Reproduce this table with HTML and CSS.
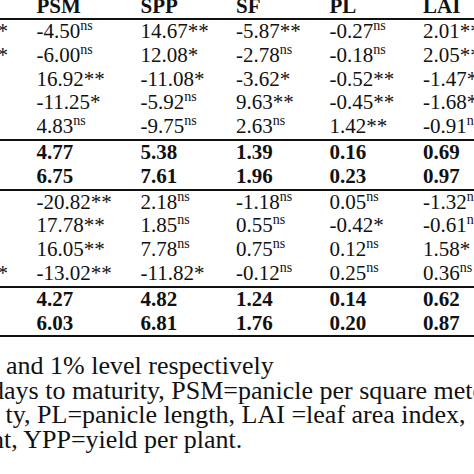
FILE: index.html
```html
<!DOCTYPE html>
<html lang="en">
<head>
<meta charset="utf-8">
<title>Table</title>
<link rel="stylesheet" href="styles.css">
</head>
<body>
<div class="page">
  <div class="tbl">
    <div class="row head">
      <div class="cut"></div>
      <div>PSM</div><div>SPP</div><div>SF</div><div>PL</div><div>LAI</div>
    </div>
    <div class="block">
      <div class="row"><div class="cut">1.06**</div><div>-4.50<sup>ns</sup></div><div>14.67**</div><div>-5.87**</div><div>-0.27<sup>ns</sup></div><div>2.01**</div></div>
      <div class="row"><div class="cut">1.33**</div><div>-6.00<sup>ns</sup></div><div>12.08*</div><div>-2.78<sup>ns</sup></div><div>-0.18<sup>ns</sup></div><div>2.05**</div></div>
      <div class="row"><div class="cut"></div><div>16.92**</div><div>-11.08*</div><div>-3.62*</div><div>-0.52**</div><div>-1.47**</div></div>
      <div class="row"><div class="cut"></div><div>-11.25*</div><div>-5.92<sup>ns</sup></div><div>9.63**</div><div>-0.45**</div><div>-1.68**</div></div>
      <div class="row"><div class="cut"></div><div>4.83<sup>ns</sup></div><div>-9.75<sup>ns</sup></div><div>2.63<sup>ns</sup></div><div>1.42**</div><div>-0.91<sup>ns</sup></div></div>
    </div>
    <div class="block bold">
      <div class="row"><div class="cut"></div><div>4.77</div><div>5.38</div><div>1.39</div><div>0.16</div><div>0.69</div></div>
      <div class="row"><div class="cut"></div><div>6.75</div><div>7.61</div><div>1.96</div><div>0.23</div><div>0.97</div></div>
    </div>
    <div class="block">
      <div class="row"><div class="cut"></div><div>-20.82**</div><div>2.18<sup>ns</sup></div><div>-1.18<sup>ns</sup></div><div>0.05<sup>ns</sup></div><div>-1.32<sup>ns</sup></div></div>
      <div class="row"><div class="cut"></div><div>17.78**</div><div>1.85<sup>ns</sup></div><div>0.55<sup>ns</sup></div><div>-0.42*</div><div>-0.61<sup>ns</sup></div></div>
      <div class="row"><div class="cut"></div><div>16.05**</div><div>7.78<sup>ns</sup></div><div>0.75<sup>ns</sup></div><div>0.12<sup>ns</sup></div><div>1.58*</div></div>
      <div class="row"><div class="cut">2.41**</div><div>-13.02**</div><div>-11.82*</div><div>-0.12<sup>ns</sup></div><div>0.25<sup>ns</sup></div><div>0.36<sup>ns</sup></div></div>
    </div>
    <div class="block bold">
      <div class="row"><div class="cut"></div><div>4.27</div><div>4.82</div><div>1.24</div><div>0.14</div><div>0.62</div></div>
      <div class="row"><div class="cut"></div><div>6.03</div><div>6.81</div><div>1.76</div><div>0.20</div><div>0.87</div></div>
    </div>
  </div>
  <div class="notes">
    <div class="line l1">and 1% level respectively</div>
    <div class="line l2">days to maturity, PSM=panicle per square meter,</div>
    <div class="line l3">ty, PL=panicle length, LAI =leaf area index,</div>
    <div class="line l4">nt, YPP=yield per plant.</div>
  </div>
</div>
</body>
</html>
```

FILE: styles.css
```css
html, body {
  margin: 0;
  padding: 0;
  background: #ffffff;
  overflow: hidden;
}
body {
  width: 474px;
  height: 474px;
  font-family: "Liberation Serif", "Times New Roman", serif;
  color: #111111;
}
.page {
  width: 474px;
  height: 474px;
  overflow: hidden;
}
.tbl {
  margin-top: -5.5px;
  font-size: 21px;
}
.row {
  display: grid;
  grid-template-columns: 36.5px 104px 95.5px 93.5px 93.5px 1fr;
  height: 23.8px;
  line-height: 23.8px;
  white-space: nowrap;
}
.row > div {
  min-width: 0;
}
.head {
  height: 23.5px;
  line-height: 23.5px;
  font-weight: bold;
  border-bottom: 2px solid #111111;
}
.block {
  border-bottom: 2px solid #111111;
}
.bold {
  font-weight: bold;
}
.cut {
  display: flex;
  justify-content: flex-end;
  padding-right: 28.5px;
}
sup {
  font-size: 14px;
  line-height: 0;
  vertical-align: 8px;
}
.notes {
  margin-top: 16.5px;
  font-size: 26px;
  line-height: 24.7px;
  white-space: nowrap;
}
.line {
  height: 24.7px;
}
.l1 { margin-left: 6px; }
.l2 { margin-left: -9px; }
.l3 { margin-left: 5.5px; }
.l4 { margin-left: -9px; }
```
